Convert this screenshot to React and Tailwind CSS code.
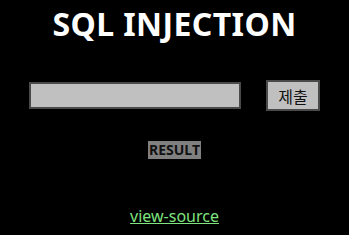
import React from "react";

export default function App() {
  return (
    <div
      className="w-[349px] h-[235px] bg-black flex flex-col items-center"
      style={{ fontFamily: '"Noto Sans", "Noto Sans CJK KR", sans-serif' }}
    >
      <h1 className="mt-[4px] text-[32px] leading-[40px] font-bold text-white tracking-[0.4px]">
        SQL INJECTION
      </h1>
      <form className="mt-[36px] flex items-center gap-[25px]">
        <input
          type="text"
          className="w-[212px] h-[27px] bg-[#c0c0c0] border-2 border-[#4a4a4a] outline-none"
        />
        <button
          type="button"
          className="w-[54px] h-[31px] bg-[#c0c0c0] border-2 border-[#4a4a4a] text-[16px] leading-none text-[#111]"
          style={{ fontFamily: '"Noto Sans CJK KR", sans-serif' }}
        >
          제출
        </button>
      </form>
      <div className="mt-[30px] bg-[#808080] h-[18px] px-[1px] flex items-center text-[14px] font-bold text-[#111] leading-none">
        RESULT
      </div>
      <a
        href="#"
        className="mt-[47px] text-[16px] leading-[20px] text-[#7fe37f] underline"
      >
        view-source
      </a>
    </div>
  );
}
